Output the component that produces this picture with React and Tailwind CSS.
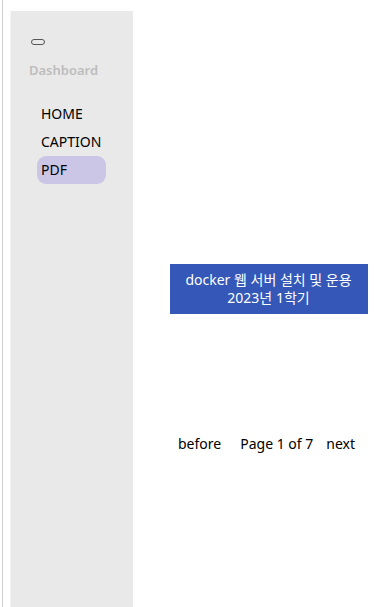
const font = { fontFamily: '"Noto Sans", "Noto Sans CJK KR", sans-serif' };

function Sidebar() {
  return (
    <aside className="flex-1 w-[123px] bg-[#e9e9e9] border-l border-[#f4f4f4] pt-[28px] px-[19px]">
      <div className="ml-[1px] h-[6px] w-[14px] rounded-full border border-[#555]" />
      <div className="mt-[15px] -ml-[1px] text-[13px] font-semibold text-[#bdbdbd] leading-[20px]">Dashboard</div>
      <nav className="mt-[24px] flex flex-col gap-[8px] text-[14px] text-black leading-[20px]">
        <div className="ml-[11px]">HOME</div>
        <div className="ml-[11px]">CAPTION</div>
        <div className="ml-[7px] w-[69px] h-[28px] rounded-[9px] bg-[#cbc6e6] px-[4px] flex items-center -mt-[4px]">
          PDF
        </div>
      </nav>
    </aside>
  );
}

export default function App() {
  return (
    <div style={font} className="h-[607px] overflow-hidden bg-white flex">
      <div className="w-[3px] shrink-0 border-r border-[#d0d0d0] mr-[7px] h-full" />
      <div className="flex flex-col pt-[11px]">
        <Sidebar />
      </div>
      <main className="flex-1 flex flex-col items-center pl-[30px] pt-[264px]">
        <div className="w-[198px] h-[50px] bg-[#3457b8] text-white text-[14px] leading-[18px] flex flex-col items-center justify-center">
          <div>docker 웹 서버 설치 및 운용</div>
          <div>2023년 1학기</div>
        </div>
        <div className="mt-[119px] mr-[4px] flex text-[14px] text-black">
          <span>before</span>
          <span className="ml-[19px]">Page 1 of 7</span>
          <span className="ml-[13px]">next</span>
        </div>
      </main>
    </div>
  );
}
